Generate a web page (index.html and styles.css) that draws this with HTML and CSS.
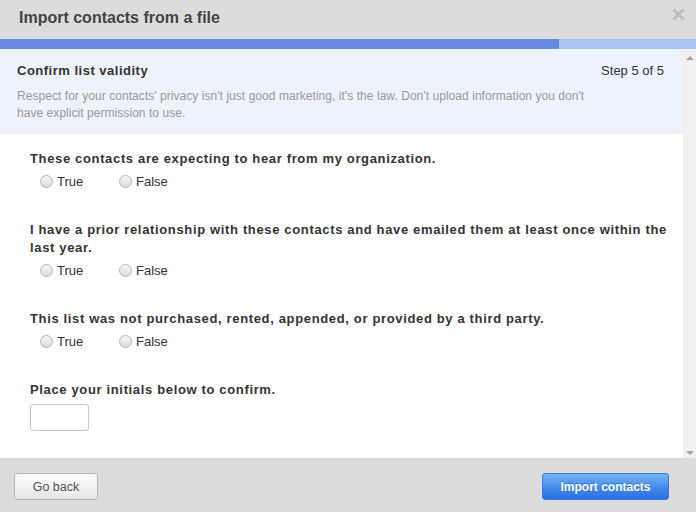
FILE: index.html
```html
<!DOCTYPE html>
<html>
<head>
<meta charset="utf-8">
<link rel="stylesheet" href="styles.css">
</head>
<body>
<div class="dialog">
  <div class="header">
    <h1 class="title">Import contacts from a file</h1>
    <svg class="close" width="13" height="13" viewBox="0 0 13 13"><path d="M1.5 1.5 L11.5 11.5 M11.5 1.5 L1.5 11.5" stroke="#bdbdbd" stroke-width="2.6" stroke-linecap="butt"/></svg>
  </div>
  <div class="progress"><div class="progress-fill"></div></div>
  <div class="body">
    <div class="content">
      <div class="info">
        <div class="info-top">
          <h2 class="info-title">Confirm list validity</h2>
          <span class="step">Step 5 of 5</span>
        </div>
        <p class="info-desc">Respect for your contacts' privacy isn't just good marketing, it's the law. Don't upload information you don't have explicit permission to use.</p>
      </div>
      <div class="questions">
        <div class="question">
          <p class="q-text">These contacts are expecting to hear from my organization.</p>
          <div class="radios">
            <label class="radio"><span class="dot"></span>True</label>
            <label class="radio"><span class="dot"></span>False</label>
          </div>
        </div>
        <div class="question">
          <p class="q-text">I have a prior relationship with these contacts and have emailed them at least once within the last year.</p>
          <div class="radios">
            <label class="radio"><span class="dot"></span>True</label>
            <label class="radio"><span class="dot"></span>False</label>
          </div>
        </div>
        <div class="question">
          <p class="q-text">This list was not purchased, rented, appended, or provided by a third party.</p>
          <div class="radios">
            <label class="radio"><span class="dot"></span>True</label>
            <label class="radio"><span class="dot"></span>False</label>
          </div>
        </div>
        <div class="question">
          <p class="q-text">Place your initials below to confirm.</p>
          <div class="initials"></div>
        </div>
      </div>
    </div>
    <div class="scrollbar">
      <span class="arrow up"></span>
      <span class="arrow down"></span>
    </div>
  </div>
  <div class="footer">
    <button class="btn btn-back">Go back</button>
    <button class="btn btn-primary">Import contacts</button>
  </div>
</div>
</body>
</html>
```

FILE: styles.css
```css
html, body {
  margin: 0;
  padding: 0;
}
body {
  font-family: "Liberation Sans", Arial, sans-serif;
  background: #fff;
}
.dialog {
  width: 696px;
  height: 512px;
  display: flex;
  flex-direction: column;
  overflow: hidden;
}
.header {
  height: 39px;
  background: #dcdcdc;
  display: flex;
  align-items: center;
  justify-content: space-between;
  padding: 0 11px 4px 19px;
  box-sizing: border-box;
}
.title {
  margin: 0;
  font-size: 16px;
  font-weight: bold;
  color: #444;
}
.close {
  display: block;
  margin-top: -6px;
}
.progress {
  height: 10px;
  background: #a8c5f0;
}
.progress-fill {
  width: 559px;
  height: 100%;
  background: #6589e3;
}
.body {
  flex: 1;
  display: flex;
  min-height: 0;
}
.content {
  flex: 1;
  overflow: hidden;
}
.scrollbar {
  width: 13px;
  background: #f0f0f0;
  display: flex;
  flex-direction: column;
  justify-content: space-between;
  align-items: center;
  padding: 7px 0 3px;
  box-sizing: border-box;
}
.arrow {
  width: 0;
  height: 0;
  border-left: 4px solid transparent;
  border-right: 4px solid transparent;
}
.arrow.up {
  border-bottom: 4px solid #a3a3a3;
}
.arrow.down {
  border-top: 4px solid #a3a3a3;
}
.info {
  background: #edf3fc;
  height: 85px;
  box-sizing: border-box;
  padding: 14px 19px 0 17px;
}
.info-top {
  display: flex;
  justify-content: space-between;
  align-items: baseline;
}
.info-title {
  margin: 0;
  font-size: 13px;
  font-weight: bold;
  color: #333;
  line-height: 16px;
  letter-spacing: 0.5px;
}
.step {
  font-size: 13px;
  color: #333;
}
.info-desc {
  margin: 9px 0 0;
  font-size: 12px;
  line-height: 17px;
  color: #9a9a9a;
  letter-spacing: 0.05px;
  max-width: 580px;
}
.questions {
  padding: 16px 10px 0 30px;
}
.question {
  margin-bottom: 30px;
}
.q-text {
  margin: 0;
  font-size: 13px;
  font-weight: bold;
  line-height: 18px;
  color: #333;
  letter-spacing: 0.65px;
}
.radios {
  display: flex;
  margin-top: 3px;
  height: 20px;
  align-items: center;
  padding-left: 10px;
}
.radio {
  display: flex;
  align-items: center;
  font-size: 13px;
  color: #333;
  width: 79px;
}
.dot {
  width: 11px;
  height: 11px;
  border-radius: 50%;
  border: 1px solid #b5b5b5;
  background: linear-gradient(#f6f6f6, #dcdcdc);
  margin-right: 4px;
  flex: none;
}
.initials {
  margin-top: 5px;
  width: 59px;
  height: 27px;
  box-sizing: border-box;
  border: 1px solid #c8c8c8;
  border-radius: 3px;
  background: #fff;
}
.footer {
  height: 54px;
  background: #dcdcdc;
  display: flex;
  justify-content: space-between;
  align-items: flex-start;
  padding: 15px 27px 0 14px;
  box-sizing: border-box;
}
.btn {
  height: 27px;
  border-radius: 3px;
  font-family: "Liberation Sans", Arial, sans-serif;
  font-size: 12.5px;
  padding: 0;
  cursor: pointer;
}
.btn-back {
  width: 84px;
  border: 1px solid #b8b8b8;
  background: linear-gradient(#fdfdfd, #e6e6e6);
  color: #555;
}
.btn-primary {
  width: 127px;
  border: 1px solid #3b7be0;
  background: linear-gradient(#74b5f8, #3e86ea 60%, #2f6fe2);
  color: #fff;
  font-weight: bold;
  font-size: 12px;
  text-shadow: 0 -1px 0 rgba(0, 40, 120, 0.35);
}
```
